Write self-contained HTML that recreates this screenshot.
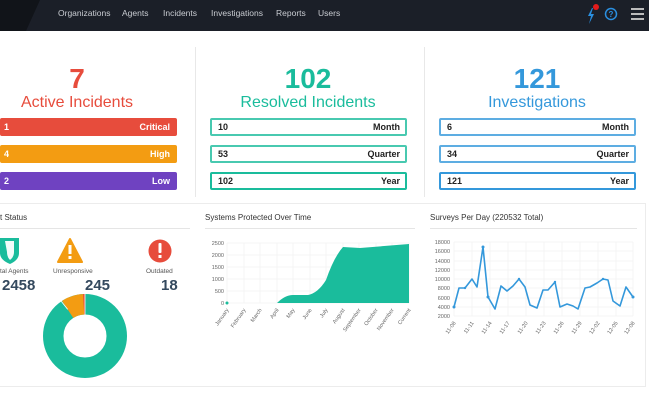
<!DOCTYPE html>
<html><head><meta charset="utf-8"><style>
*{margin:0;padding:0;box-sizing:border-box}
body{width:649px;height:410px;overflow:hidden;background:#fff;font-family:"Liberation Sans",sans-serif;position:relative}
.nav{position:absolute;left:0;top:0;width:649px;height:31px;background:#1b1f28}
.nav .logo{position:absolute;left:0;top:0;width:0;height:0;border-top:31px solid #111419;border-right:14px solid transparent;}
.nav .logo2{position:absolute;left:0;top:0;width:26px;height:31px;background:#111419}
.nav a{position:absolute;top:8px;font-size:8.5px;color:#c9ccd2}
.abs{position:absolute}
.big{position:absolute;font-weight:bold;font-size:28px;text-align:center;width:200px}
.ttl{position:absolute;font-size:16px;text-align:center;width:240px}
.bar{position:absolute;height:18px;border-radius:2px;color:#fff;font-weight:bold;font-size:9px;line-height:18px;padding:0 7px 0 4px}
.bar span{float:right}
.box{position:absolute;height:18px;border-radius:2px;border:2px solid;font-weight:bold;font-size:9px;line-height:14px;padding:0 5px 0 6px;color:#222;background:#fff}
.box span{float:right}
.vl{position:absolute;top:47px;width:1px;height:150px;background:#e8e8e8}
.h{position:absolute;top:213px;font-size:8px;color:#333}
.ul{position:absolute;top:228px;height:1px;background:#e5e5e5}
.lbl{position:absolute;top:268px;font-size:6.5px;color:#555}
.num{position:absolute;top:277px;font-size:15px;font-weight:bold;color:#34495e}
</style></head><body>
<div class="nav"><div class="logo2"></div><div class="logo" style="left:26px"></div>
<a style="left:58px">Organizations</a><a style="left:122px">Agents</a><a style="left:163px">Incidents</a><a style="left:211px">Investigations</a><a style="left:276px">Reports</a><a style="left:318px">Users</a>
<svg class="abs" style="left:584px;top:2px" width="65" height="26">
<path d="M8 6 L4 14 L7 14 L5 22 L10 12 L7 12 L9 6Z" fill="#2a8fe0"/>
<circle cx="12" cy="5" r="3" fill="#e31b1b"/>
<circle cx="27" cy="12" r="5.5" fill="none" stroke="#2a8fe0" stroke-width="1.5"/>
<text x="27" y="15" font-size="8" font-weight="bold" fill="#2a8fe0" text-anchor="middle" font-family="Liberation Sans">?</text>
<rect x="47" y="6" width="13" height="2" fill="#bbb"/><rect x="47" y="11" width="13" height="2" fill="#bbb"/><rect x="47" y="16" width="13" height="2" fill="#bbb"/>
</svg>
</div>

<div class="vl" style="left:195px"></div><div class="vl" style="left:424px"></div>

<div class="big" style="left:-23px;top:63px;color:#e74c3c">7</div>
<div class="ttl" style="left:-43px;top:94px;color:#e74c3c">Active Incidents</div>
<div class="bar" style="left:0;top:118px;width:177px;background:#e74c3c">1<span>Critical</span></div>
<div class="bar" style="left:0;top:145px;width:177px;background:#f39c12">4<span>High</span></div>
<div class="bar" style="left:0;top:172px;width:177px;background:#6f42c1">2<span>Low</span></div>

<div class="big" style="left:208px;top:63px;color:#1abc9c">102</div>
<div class="ttl" style="left:188px;top:94px;color:#1abc9c">Resolved Incidents</div>
<div class="box" style="left:210px;top:118px;width:197px;border-color:#48c9b0">10<span>Month</span></div>
<div class="box" style="left:210px;top:145px;width:197px;border-color:#48c9b0">53<span>Quarter</span></div>
<div class="box" style="left:210px;top:172px;width:197px;border-color:#1abc9c">102<span>Year</span></div>

<div class="big" style="left:437px;top:63px;color:#3498db">121</div>
<div class="ttl" style="left:417px;top:94px;color:#3498db">Investigations</div>
<div class="box" style="left:439px;top:118px;width:197px;border-color:#5dade2">6<span>Month</span></div>
<div class="box" style="left:439px;top:145px;width:197px;border-color:#5dade2">34<span>Quarter</span></div>
<div class="box" style="left:439px;top:172px;width:197px;border-color:#3498db">121<span>Year</span></div>

<div class="abs" style="left:0;top:203px;width:646px;height:184px;border:1px solid #ececec;border-left:none"></div>
<div class="h" style="left:0">t Status</div>
<div class="h" style="left:205px">Systems Protected Over Time</div>
<div class="h" style="left:430px">Surveys Per Day (220532 Total)</div>
<div class="ul" style="left:0;width:190px"></div>
<div class="ul" style="left:205px;width:210px"></div>
<div class="ul" style="left:430px;width:207px"></div>

<svg class="abs" style="left:0;top:235px" width="190" height="32">
<path d="M0 3 H19 V18 Q19 25 10 29 Q0 25 0 18Z" fill="#1abc9c"/>
<path d="M5 6 H14 V17 Q14 22 10 25 Q7 22 7 17Z" fill="#fff" opacity="0.95"/>
<path d="M70 4 L82 27 H58Z" fill="#f39c12" stroke="#f39c12" stroke-width="2" stroke-linejoin="round"/>
<rect x="68.5" y="10" width="3" height="9" fill="#fff"/><rect x="68.5" y="21" width="3" height="3" fill="#fff"/>
<circle cx="160" cy="16" r="11.5" fill="#e74c3c"/>
<rect x="158.5" y="8" width="3" height="10" rx="1" fill="#fff"/><rect x="158.5" y="20" width="3" height="3" fill="#fff"/>
</svg>
<div class="lbl" style="left:0">tal Agents</div>
<div class="lbl" style="left:53px">Unresponsive</div>
<div class="lbl" style="left:146px">Outdated</div>
<div class="num" style="left:2px">2458</div>
<div class="num" style="left:85px">245</div>
<div class="num" style="left:161px">18</div>

<svg class="abs" style="left:0;top:0" width="200" height="410">
<circle cx="85" cy="336" r="31.75" fill="none" stroke="#1abc9c" stroke-width="20.5"/>
<path d="M85 304.25 A31.75 31.75 0 0 0 67.7 309.4" fill="none" stroke="#f39c12" stroke-width="20.5"/>
<path d="M85.3 304.25 A31.75 31.75 0 0 0 83.6 304.3" fill="none" stroke="#e74c3c" stroke-width="20.5"/>
<line x1="85" y1="294" x2="85" y2="315" stroke="#fff" stroke-width="0.8"/>
<line x1="67.7" y1="309.4" x2="61" y2="301" stroke="#fff" stroke-width="0.8"/>
</svg>

<svg class="abs" style="left:200px;top:235px" width="449" height="120" font-family="Liberation Sans" font-size="5.5" fill="#666">
<g stroke="#eee" stroke-width="0.6">
<line x1="27" y1="8" x2="209" y2="8"/><line x1="27" y1="20" x2="209" y2="20"/><line x1="27" y1="32" x2="209" y2="32"/><line x1="27" y1="44" x2="209" y2="44"/><line x1="27" y1="56" x2="209" y2="56"/><line x1="27" y1="68" x2="209" y2="68"/>
<line x1="27" y1="8" x2="27" y2="68"/><line x1="44" y1="8" x2="44" y2="68"/><line x1="60" y1="8" x2="60" y2="68"/><line x1="77" y1="8" x2="77" y2="68"/><line x1="93" y1="8" x2="93" y2="68"/><line x1="110" y1="8" x2="110" y2="68"/><line x1="126" y1="8" x2="126" y2="68"/><line x1="143" y1="8" x2="143" y2="68"/><line x1="159" y1="8" x2="159" y2="68"/><line x1="176" y1="8" x2="176" y2="68"/><line x1="192" y1="8" x2="192" y2="68"/><line x1="209" y1="8" x2="209" y2="68"/>
</g>
<path d="M27 68 L77 68 Q85 60 93 60 L108 60 Q118 58 126 45 Q134 22 143 12 L160 13 L209 9 L209 68Z" fill="#1abc9c"/>
<circle cx="27" cy="68" r="1.5" fill="#1abc9c"/>
<g text-anchor="end"><text x="24" y="10">2500</text><text x="24" y="22">2000</text><text x="24" y="34">1500</text><text x="24" y="46">1000</text><text x="24" y="58">500</text><text x="24" y="70">0</text></g>
<g text-anchor="end">
<text transform="translate(29,75) rotate(-55)">January</text><text transform="translate(46,75) rotate(-55)">February</text><text transform="translate(62,75) rotate(-55)">March</text><text transform="translate(79,75) rotate(-55)">April</text><text transform="translate(95,75) rotate(-55)">May</text><text transform="translate(112,75) rotate(-55)">June</text><text transform="translate(128,75) rotate(-55)">July</text><text transform="translate(145,75) rotate(-55)">August</text><text transform="translate(161,75) rotate(-55)">September</text><text transform="translate(178,75) rotate(-55)">October</text><text transform="translate(194,75) rotate(-55)">November</text><text transform="translate(211,75) rotate(-55)">Current</text>
</g>
<g stroke="#eee" stroke-width="0.6">
<line x1="254" y1="7" x2="433" y2="7"/><line x1="254" y1="16" x2="433" y2="16"/><line x1="254" y1="26" x2="433" y2="26"/><line x1="254" y1="35" x2="433" y2="35"/><line x1="254" y1="44" x2="433" y2="44"/><line x1="254" y1="53" x2="433" y2="53"/><line x1="254" y1="63" x2="433" y2="63"/><line x1="254" y1="72" x2="433" y2="72"/><line x1="254" y1="81" x2="433" y2="81"/>
<line x1="254" y1="7" x2="254" y2="81"/><line x1="272" y1="7" x2="272" y2="81"/><line x1="290" y1="7" x2="290" y2="81"/><line x1="308" y1="7" x2="308" y2="81"/><line x1="326" y1="7" x2="326" y2="81"/><line x1="344" y1="7" x2="344" y2="81"/><line x1="362" y1="7" x2="362" y2="81"/><line x1="380" y1="7" x2="380" y2="81"/><line x1="398" y1="7" x2="398" y2="81"/><line x1="416" y1="7" x2="416" y2="81"/><line x1="433" y1="7" x2="433" y2="81"/>
</g>
<polyline fill="none" stroke="#3498db" stroke-width="1.6" stroke-linejoin="round" points="254,72 259,53 265,53 272,44 277,52 283,12 288,62 295,74 301,51 307,56 313,51 319,44 325,52 330,70 337,73 343,55 348,55 355,47 360,72 367,69 373,71 378,74 385,53 390,52 397,48 403,44 408,45 413,66 420,71 426,52 433,62"/>
<g fill="#3498db"><circle cx="254" cy="72" r="1.5"/><circle cx="283" cy="12" r="1.5"/><circle cx="288" cy="62" r="1.5"/><circle cx="433" cy="62" r="1.5"/><circle cx="265" cy="53" r="1.2"/><circle cx="319" cy="44" r="1.2"/><circle cx="355" cy="47" r="1.2"/><circle cx="403" cy="44" r="1.2"/></g>
<g text-anchor="end"><text x="250" y="9">18000</text><text x="250" y="18">16000</text><text x="250" y="28">14000</text><text x="250" y="37">12000</text><text x="250" y="46">10000</text><text x="250" y="55">8000</text><text x="250" y="65">6000</text><text x="250" y="74">4000</text><text x="250" y="83">2000</text></g>
<g text-anchor="end">
<text transform="translate(256,88) rotate(-55)">11-08</text><text transform="translate(274,88) rotate(-55)">11-11</text><text transform="translate(292,88) rotate(-55)">11-14</text><text transform="translate(310,88) rotate(-55)">11-17</text><text transform="translate(328,88) rotate(-55)">11-20</text><text transform="translate(346,88) rotate(-55)">11-23</text><text transform="translate(364,88) rotate(-55)">11-26</text><text transform="translate(382,88) rotate(-55)">11-29</text><text transform="translate(400,88) rotate(-55)">12-02</text><text transform="translate(418,88) rotate(-55)">12-05</text><text transform="translate(435,88) rotate(-55)">12-08</text>
</g>
</svg>
</body></html>
